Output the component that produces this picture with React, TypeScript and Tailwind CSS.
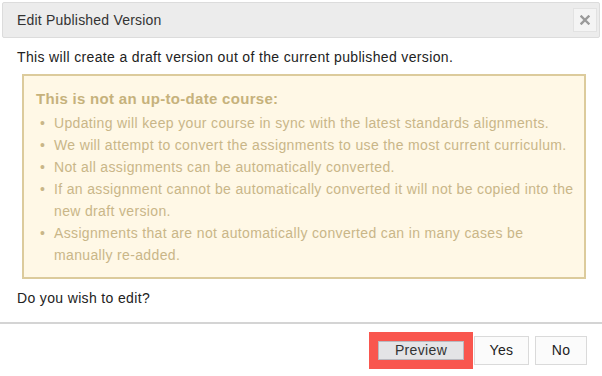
import React from 'react';

const notes = [
  'Updating will keep your course in sync with the latest standards alignments.',
  'We will attempt to convert the assignments to use the most current curriculum.',
  'Not all assignments can be automatically converted.',
  'If an assignment cannot be automatically converted it will not be copied into the new draft version.',
  'Assignments that are not automatically converted can in many cases be manually re-added.',
];

const App = () => {
  return (
    <div className="w-[602px] h-[376px] bg-white overflow-hidden font-['Liberation_Sans',Arial,sans-serif] text-[14px] tracking-[0.35px] text-[#222]">
      {/* Title bar */}
      <div className="mx-[2px] mt-[2px] h-[36px] bg-[#ececec] border border-[#dcdcdc] rounded-[2px] flex items-center justify-between pl-[14px] pr-[2px]">
        <span className="text-[#333] tracking-[0.2px]">Edit Published Version</span>
        <button className="w-[24px] h-[24px] bg-[#f4f4f4] border border-[#e2e2e2] flex items-center justify-center">
          <svg width="10" height="10" viewBox="0 0 10 10">
            <path d="M1.5 1.5 L8.5 8.5 M8.5 1.5 L1.5 8.5" stroke="#9a9a9a" strokeWidth="2.4" strokeLinecap="square" />
          </svg>
        </button>
      </div>

      {/* Body */}
      <div className="pl-[17px] pr-[16px]">
        <p className="mt-[11px] leading-[16px]">This will create a draft version out of the current published version.</p>

        <div className="mt-[9px] ml-[5px] w-[564px] h-[205px] bg-[#fff8e6] border-2 border-[#dccb9c] pl-[12px] pt-[14px] text-[#c9b688]">
          <div className="font-bold text-[15px] leading-[18px] tracking-[0.3px] text-[#c6b27c]">This is not an up-to-date course:</div>
          <ul className="mt-[4px]">
            {notes.map((n) => (
              <li key={n} className="flex leading-[22px]">
                <span className="w-[18px] pl-[4px] shrink-0">•</span>
                <span className="w-[520px]">{n}</span>
              </li>
            ))}
          </ul>
        </div>

        <p className="mt-[11px] leading-[16px]">Do you wish to edit?</p>
      </div>

      <div className="mt-[16px] h-[2px] bg-[#d4d4d4]" />

      {/* Buttons */}
      <div className="flex items-center justify-end pr-[15px] pt-[8px] gap-[6px]">
        <div className="bg-[#f9564e] px-[9px] py-[8px] -mr-[5px]">
          <button className="w-[86px] h-[19px] bg-[#e4e4e6] border border-[#b9b9bf] text-[#333] text-[14px] leading-[17px]">Preview</button>
        </div>
        <button className="w-[55px] h-[29px] bg-[#fbfbfb] border border-[#dadada] text-[#222] text-[14px]">Yes</button>
        <button className="w-[52px] h-[29px] bg-[#fbfbfb] border border-[#dadada] text-[#222] text-[14px]">No</button>
      </div>
    </div>
  );
};

export default App;
